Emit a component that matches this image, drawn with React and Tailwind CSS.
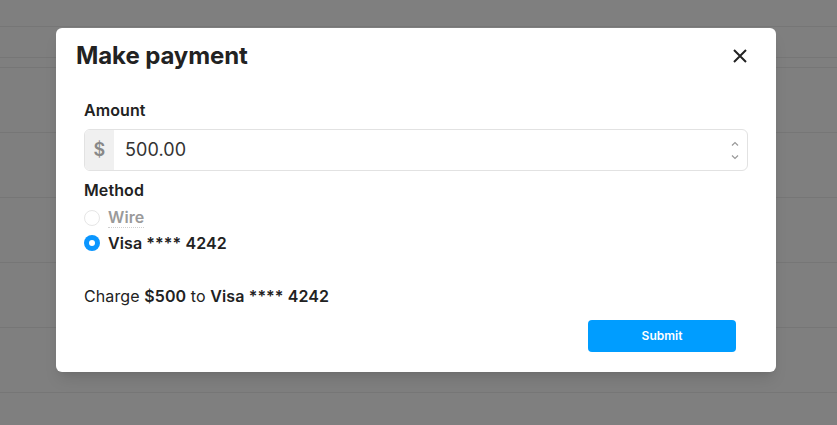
import { useState } from 'react';

const rowHeights = ['h-[27px]', 'h-[31px]', 'h-[10px]', 'h-[65px]', 'h-[65px]', 'h-[65px]', 'h-[65px]', 'h-[65px]', 'h-[65px]'];

const Radio = ({ checked }) =>
  checked ? (
    <span className="flex h-4 w-4 items-center justify-center rounded-full bg-[#0a96ff]">
      <span className="h-[6px] w-[6px] rounded-full bg-white" />
    </span>
  ) : (
    <span className="h-4 w-4 rounded-full border border-[#e6e6e6] bg-white" />
  );

const App = () => {
  const [method, setMethod] = useState('visa');

  return (
    <div className="relative h-[425px] w-full overflow-hidden bg-white font-['Inter',sans-serif] text-[#222]">
      {/* page behind the dialog */}
      <div className="flex flex-col">
        {rowHeights.map((h, i) => (
          <div key={i} className={`${h} border-b border-[#ececec]`} />
        ))}
      </div>

      {/* overlay */}
      <div className="absolute inset-0 bg-black/50">
        <div className="ml-[56px] mt-[28px] flex w-[720px] flex-col rounded-md bg-white pb-5 shadow-lg">
          {/* Header */}
          <div className="flex items-start justify-between pl-5 pr-[29px] pt-[12px]">
            <h2 className="text-2xl leading-8 font-bold tracking-[-0.1px] text-[#222]">Make payment</h2>
            <button className="mt-[9px] text-[#222]">
              <svg width="14" height="14" viewBox="0 0 14 14" fill="none" stroke="currentColor" strokeWidth="2">
                <path d="M1 1l12 12M13 1L1 13" />
              </svg>
            </button>
          </div>

          {/* Body */}
          <div className="flex flex-col px-7 pt-[26px] tracking-[0.1px]">
            <label className="text-base leading-6 font-semibold">Amount</label>
            <div className="mt-[7px] flex h-[42px] items-stretch overflow-hidden rounded-md border border-[#e2e2e2]">
              <span className="flex w-[29px] items-center justify-center bg-[#f0f0f0] text-lg font-semibold text-[#888]">$</span>
              <span className="flex flex-1 items-center pl-[11px] text-lg text-[#333]">500.00</span>
              <span className="flex w-6 flex-col items-center justify-center gap-[9px] text-[#999]">
                <svg width="8" height="5" viewBox="0 0 8 5" fill="none" stroke="currentColor" strokeWidth="1.2">
                  <path d="M1 4.5L4 1.5l3 3" />
                </svg>
                <svg width="8" height="5" viewBox="0 0 8 5" fill="none" stroke="currentColor" strokeWidth="1.2">
                  <path d="M1 0.5l3 3 3-3" />
                </svg>
              </span>
            </div>

            <label className="mt-[7px] text-base leading-6 font-semibold">Method</label>
            <div className="mt-[3px] flex flex-col">
              <button onClick={() => setMethod('wire')} className="flex h-[25px] items-center gap-2 text-left">
                <Radio checked={method === 'wire'} />
                <span
                  className={
                    method === 'wire'
                      ? 'text-base font-semibold text-[#222]'
                      : 'border-b border-dotted border-[#d0d0d0] text-base leading-5 font-semibold text-[#9a9a9a]'
                  }
                >
                  Wire
                </span>
              </button>
              <button onClick={() => setMethod('visa')} className="flex h-[25px] items-center gap-2 text-left">
                <Radio checked={method === 'visa'} />
                <span className="text-base font-semibold text-[#222]">Visa **** 4242</span>
              </button>
            </div>

            <p className="mt-[29px] text-base leading-6 text-[#222]">
              Charge <span className="font-semibold">$500</span> to{' '}
              <span className="font-semibold">{method === 'visa' ? 'Visa **** 4242' : 'Wire'}</span>
            </p>
          </div>

          {/* Footer */}
          <div className="mt-[12px] flex justify-end pr-10">
            <button className="h-8 w-[148px] rounded bg-[#009dff] text-xs font-semibold text-white">Submit</button>
          </div>
        </div>
      </div>
    </div>
  );
};

export default App;
